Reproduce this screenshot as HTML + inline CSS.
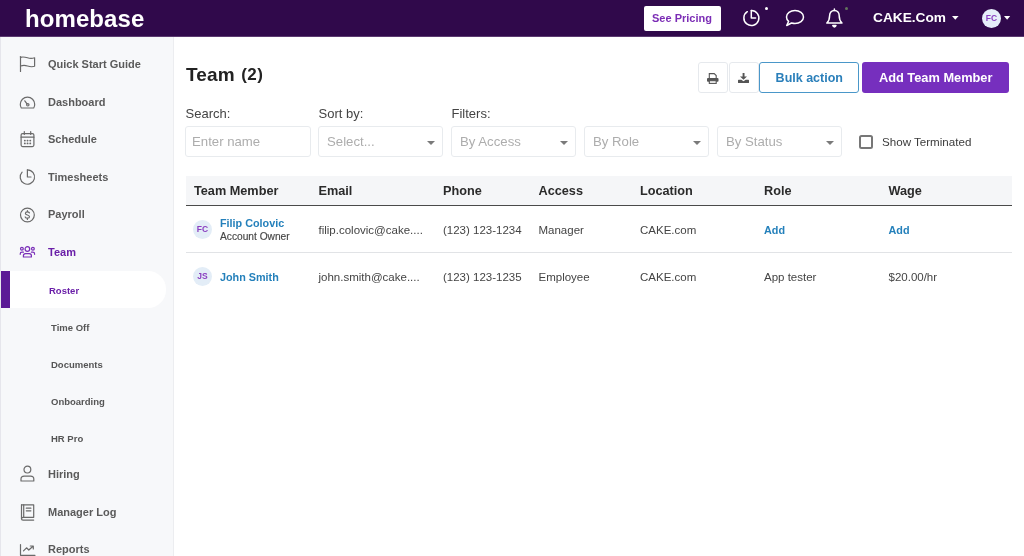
<!DOCTYPE html>
<html><head><meta charset="utf-8">
<style>
*{box-sizing:border-box;margin:0;padding:0}
html,body{width:1024px;height:556px;overflow:hidden;background:#fff;font-family:"Liberation Sans",sans-serif;color:#333}
div,span{position:absolute;white-space:nowrap}
#hdr{left:0;top:0;width:1024px;height:37px;background:#30094b;border-bottom:1px solid #5b3a70}
#logo{left:25px;top:4.7px;font-size:24px;font-weight:bold;color:#fff;line-height:28px;letter-spacing:0.08px}
#side{left:0;top:37px;width:174px;height:519px;background:#f7f8fa;border-right:1px solid #ecedf0;border-left:1px solid #e6e6ec}
.nav{left:48px;font-size:11px;font-weight:bold;color:#5a5a5a;line-height:14px}
.sub{left:51px;font-size:9.5px;font-weight:bold;color:#555;line-height:12px}
svg{position:absolute;overflow:visible}
.ico{left:18px;width:20px;height:20px;fill:none;stroke:#6a6a6a;stroke-width:1.2;stroke-linecap:round;stroke-linejoin:round}
.hi{fill:none;stroke:#fff;stroke-width:1.5;stroke-linecap:round;stroke-linejoin:round}
.lbl{font-size:13px;color:#444;line-height:16px;top:105.600px}
.inp{top:126px;width:126px;height:31px;border:1px solid #e8ebee;border-radius:3px;background:#fff}
.inp span{left:8px;top:6.800px;font-size:13.200px;line-height:16px;color:#adadad}
.inp i{position:absolute;right:7px;top:14px;border-left:4px solid transparent;border-right:4px solid transparent;border-top:4px solid #7a7a7a}
.th{top:183.800px;font-size:12.700px;font-weight:bold;color:#2b2b2b;line-height:15px}
.td{font-size:11.5px;color:#444;line-height:14px}
.lnk{font-size:10.800px;font-weight:bold;color:#2480bb;line-height:14px}
.av{width:19px;height:19px;border-radius:50%;background:#e3edf7;color:#8a3fc0;font-size:8.500px;font-weight:bold;line-height:19px;text-align:center}
</style></head><body><div id="wrap" style="left:0;top:0;width:1024px;height:556px;will-change:transform">
<div id="hdr">
<div id="logo">homebase</div>
<div style="left:643.5px;top:6px;width:77px;height:24.5px;background:#fff;border-radius:2px;color:#7b2cb5;font-size:11px;font-weight:bold;line-height:24px;text-align:center">See Pricing</div>
<svg class="hi" style="left:741px;top:8px" width="20" height="20" viewBox="0 0 20 20"><path d="M10.300 2.500A7.500 7.500 0 1 1 6.300 3.700"/><path d="M10.300 2.500V10H14.600"/></svg>
<div style="left:765px;top:7px;width:3.4px;height:3.4px;border-radius:50%;background:#fff"></div>
<svg class="hi" style="left:785px;top:8px" width="20" height="20" viewBox="0 0 20 20"><path d="M10 2.5C14.7 2.5 18.5 5.4 18.5 9S14.7 15.5 10 15.5C8.8 15.5 7.7 15.3 6.500 15L1.700 17.500L3.600 13.400C2.4 12.4 1.5 10.8 1.5 9C1.5 5.4 5.3 2.5 10 2.5Z"/></svg>
<svg class="hi" style="left:824px;top:8px" width="20" height="20" viewBox="0 0 20 20"><path d="M10.4 2.5C7.3 2.5 5.6 4.8 5.6 7.8C5.6 11.5 4.4 13.6 2.8 15H18C16.4 13.6 15.2 11.5 15.2 7.8C15.2 4.8 13.5 2.5 10.4 2.5Z"/><path d="M8.800 17.600C9.100 18.500 9.700 18.900 10.400 18.900S11.700 18.500 12 17.600Z" fill="#fff"/><path d="M10.400 1V2.500"/></svg>
<div style="left:844.5px;top:7px;width:3px;height:3px;border-radius:50%;background:#63755c"></div>
<div style="left:873px;top:9px;font-size:13.7px;font-weight:bold;color:#fff;line-height:18px">CAKE.Com</div>
<svg style="left:951.500px;top:16.300px" width="6.600" height="3.800" viewBox="0 0 6.600 3.800"><path d="M0 0H6.600L3.300 3.800Z" fill="#fff"/></svg>
<div class="av" style="left:982px;top:8.500px;background:#e6eefa;font-size:8.500px">FC</div>
<svg style="left:1004.400px;top:16.300px" width="6.200" height="3.800" viewBox="0 0 6.200 3.800"><path d="M0 0H6.200L3.100 3.800Z" fill="#fff"/></svg>
</div>

<div id="side"></div>
<div style="left:1px;top:271px;width:165px;height:37px;background:#fff;border-radius:0 18px 18px 0"></div>
<div style="left:1px;top:271px;width:9px;height:37px;background:#5c1a96"></div>

<div class="nav" style="top:57px">Quick Start Guide</div>
<div class="nav" style="top:94.5px">Dashboard</div>
<div class="nav" style="top:132px">Schedule</div>
<div class="nav" style="top:169.5px">Timesheets</div>
<div class="nav" style="top:207px">Payroll</div>
<div class="nav" style="top:245px;color:#6a1fa8">Team</div>
<div class="sub" style="top:285px;left:49px;color:#6a1fa8">Roster</div>
<div class="sub" style="top:321.8px">Time Off</div>
<div class="sub" style="top:358.8px">Documents</div>
<div class="sub" style="top:395.6px">Onboarding</div>
<div class="sub" style="top:432.6px">HR Pro</div>
<div class="nav" style="top:466.8px">Hiring</div>
<div class="nav" style="top:505px">Manager Log</div>
<div class="nav" style="top:541.7px">Reports</div>

<!-- sidebar icons -->
<svg class="ico" style="top:54px" viewBox="0 0 20 20"><path d="M2.5 2.5V17.5"/><path d="M2.5 3.3C5 2.6 7 3 9.5 3.800S14 4.600 16.600 3.800V12.300C14 13.200 12 12.800 9.500 12S5 11.200 2.500 12"/></svg>
<svg class="ico" style="top:91.5px" viewBox="0 0 20 20"><path d="M3.300 16H15.700C16.400 15 16.700 13.700 16.700 12.300A7.200 7.200 0 0 0 2.300 12.300C2.300 13.700 2.600 15 3.300 16Z"/><circle cx="9.800" cy="12.800" r="1.200"/><path d="M9 11.900L6.800 8.800"/></svg>
<svg class="ico" style="top:129px" viewBox="0 0 20 20"><rect x="3.100" y="4.600" width="12.800" height="13" rx="1.500"/><path d="M3.100 8.200H15.900M6.300 2.600V5.400M12.700 2.600V5.400"/><path d="M6.800 11.600H6.900M9.500 11.600H9.600M12.200 11.600H12.300M6.800 14.400H6.900M9.500 14.400H9.600M12.200 14.400H12.300" stroke-width="1.800"/></svg>
<svg class="ico" style="top:167px" viewBox="0 0 20 20"><path d="M9.400 2.800A7.200 7.200 0 1 1 4.100 5.100"/><path d="M9.400 2.800V10H13"/></svg>
<svg class="ico" style="top:204.700px" viewBox="0 0 20 20"><circle cx="9.400" cy="10" r="6.900"/><path d="M11.400 7.900C11 7.200 10.300 6.900 9.400 6.900C8.200 6.900 7.400 7.500 7.400 8.400C7.400 9.400 8.300 9.700 9.400 10S11.500 10.700 11.500 11.700C11.500 12.600 10.600 13.200 9.400 13.200C8.400 13.200 7.600 12.800 7.200 12M9.400 5.700V6.900M9.400 13.200V14.400"/></svg>
<svg class="ico" style="top:242px;stroke:#7a2fb8" viewBox="0 0 20 20"><circle cx="9.400" cy="7" r="2.300"/><circle cx="3.900" cy="6.800" r="1.400"/><circle cx="14.900" cy="6.800" r="1.400"/><path d="M5.400 15V13.700C5.400 12.500 6.300 11.600 7.500 11.600H11.300C12.500 11.600 13.400 12.500 13.400 13.700V15Z"/><path d="M2.200 12.300V12C2.200 10.800 3 10.200 4 10.200H5.400M16.600 12.300V12C16.600 10.800 15.800 10.200 14.800 10.200H13.400"/></svg>
<svg class="ico" style="top:464px" viewBox="0 0 20 20"><circle cx="9.400" cy="5.600" r="3.400"/><path d="M3 17V15.100C3 13.300 4.400 12.100 6.200 12.100H12.600C14.400 12.100 15.800 13.300 15.800 15.100V17Z"/></svg>
<svg class="ico" style="top:502px" viewBox="0 0 20 20"><path d="M3.500 2.800H15.700V15.300H5C4 15.300 3.500 16 3.500 16.700S4 18.100 5 18.100H15.700"/><path d="M3.500 2.800V16.700M5.700 2.800V15.300M8.300 6.200H12.900M8.300 8.800H12.900"/></svg>
<svg class="ico" style="top:539.5px" viewBox="0 0 20 20"><path d="M2.500 4.500V15.300H17"/><path d="M5.500 10.800L8.500 7.800L10.800 10L15 6.200M12.300 6H15.300V9"/></svg>

<!-- main -->
<div style="left:186px;top:63.500px;font-size:19px;font-weight:bold;color:#222;line-height:22px;letter-spacing:0.100px">Team</div>
<div style="left:241.200px;top:64px;font-size:17px;font-weight:bold;color:#222;line-height:22px;letter-spacing:0.500px">(2)</div>

<div style="left:697.500px;top:62.300px;width:30.300px;height:30.400px;border:1px solid #e6e9ed;border-radius:3px"></div>
<div style="left:729px;top:62.300px;width:30.300px;height:30.400px;border:1px solid #e6e9ed;border-radius:3px"></div>
<svg style="left:706.600px;top:73.200px" width="11.500" height="11" viewBox="0 0 11.500 11"><path d="M2.300 5V0.600H7.200L9.200 2.600V5" fill="none" stroke="#555" stroke-width="1.100"/><rect x="0" y="4.900" width="11.500" height="3.900" rx="1" fill="#555"/><rect x="2.300" y="7.700" width="6.900" height="2.700" fill="#fff" stroke="#555" stroke-width="1.100"/></svg>
<svg style="left:738.100px;top:73px" width="11" height="10.500" viewBox="0 0 11 10.500" fill="#555"><rect x="4.600" y="0" width="1.900" height="4"/><path d="M2 3.600H9L5.500 6.700Z"/><path d="M0.600 6.800H3.300L5.500 8.300L7.700 6.800H10.400Q11 6.800 11 7.400V9.400Q11 10 10.400 10H0.600Q0 10 0 9.400V7.400Q0 6.800 0.600 6.800Z"/></svg>
<div style="left:759.300px;top:62.300px;width:100px;height:30.500px;border:1.300px solid #4a97c9;border-radius:3px;color:#2a7fba;font-size:12.500px;font-weight:bold;line-height:30px;text-align:center">Bulk action</div>
<div style="left:862.300px;top:62px;width:146.800px;height:31px;background:#762fbe;border-radius:3px;color:#fff;font-size:12.800px;font-weight:bold;line-height:31px;text-align:center">Add Team Member</div>

<div class="lbl" style="left:185.5px">Search:</div>
<div class="lbl" style="left:318.5px">Sort by:</div>
<div class="lbl" style="left:451.5px">Filters:</div>
<div class="inp" style="left:185px"><span style="left:6px">Enter name</span></div>
<div class="inp" style="left:318px;width:125px"><span>Select...</span><i></i></div>
<div class="inp" style="left:451px;width:125px"><span>By Access</span><i></i></div>
<div class="inp" style="left:584px;width:125px"><span>By Role</span><i></i></div>
<div class="inp" style="left:717px;width:125px"><span>By Status</span><i></i></div>
<div style="left:859px;top:135px;width:14px;height:14px;border:2px solid #777;border-radius:2.500px"></div>
<div style="left:882px;top:135px;font-size:11.600px;color:#3c3c3c;line-height:14px">Show Terminated</div>

<div style="left:185.5px;top:175.5px;width:826.5px;height:30px;background:#f5f6f8;border-bottom:1.5px solid #4a4a4a"></div>
<div style="left:185.5px;top:252px;width:826.5px;height:1px;background:#e1e3e6"></div>
<div class="th" style="left:194px">Team Member</div>
<div class="th" style="left:318.5px">Email</div>
<div class="th" style="left:443px">Phone</div>
<div class="th" style="left:538.5px">Access</div>
<div class="th" style="left:640px">Location</div>
<div class="th" style="left:764px">Role</div>
<div class="th" style="left:888.5px">Wage</div>

<div class="av" style="left:193px;top:220px">FC</div>
<div class="lnk" style="left:220px;top:216px">Filip Colovic</div>
<div style="left:220px;top:231px;font-size:10.200px;color:#444;line-height:12px;-webkit-text-stroke:0.150px #4a4a4a">Account Owner</div>
<div class="td" style="left:318.5px;top:222.5px">filip.colovic@cake....</div>
<div class="td" style="left:443px;top:222.5px">(123) 123-1234</div>
<div class="td" style="left:538.5px;top:222.5px">Manager</div>
<div class="td" style="left:640px;top:222.5px">CAKE.com</div>
<div class="lnk" style="left:764px;top:222.5px">Add</div>
<div class="lnk" style="left:888.5px;top:222.5px">Add</div>

<div class="av" style="left:193px;top:267px">JS</div>
<div class="lnk" style="left:220px;top:269.5px">John Smith</div>
<div class="td" style="left:318.5px;top:269.5px">john.smith@cake....</div>
<div class="td" style="left:443px;top:269.5px">(123) 123-1235</div>
<div class="td" style="left:538.5px;top:269.5px">Employee</div>
<div class="td" style="left:640px;top:269.5px">CAKE.com</div>
<div class="td" style="left:764px;top:269.5px">App tester</div>
<div class="td" style="left:888.5px;top:269.5px">$20.00/hr</div>
</div></body></html>
